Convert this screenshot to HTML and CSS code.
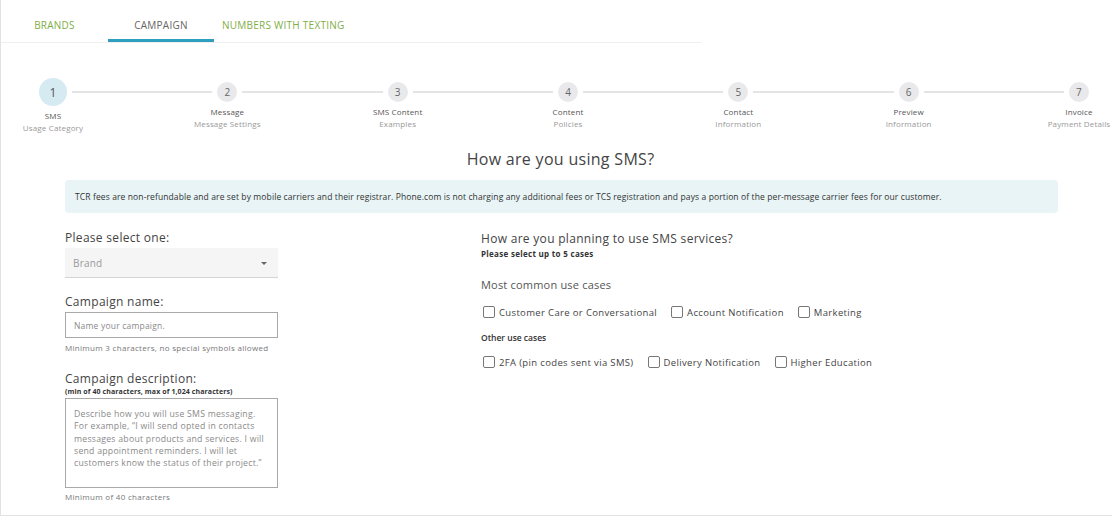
FILE: index.html
```html
<!DOCTYPE html>
<html lang="en">
<head>
  <meta charset="UTF-8">
  <meta name="viewport" content="width=device-width, initial-scale=1.0">
  <title>Campaign - SMS Usage Category</title>
  <link rel="stylesheet" href="styles.css">
</head>
<body>
  <div class="page">
    <nav class="tabs">
      <a class="tab tab-brands">Brands</a>
      <a class="tab tab-campaign active">Campaign</a>
      <a class="tab tab-numbers">Numbers with texting</a>
    </nav>

    <ol class="stepper">
      <li class="step current">
        <span class="step-num">1</span>
        <span class="step-title">SMS</span>
        <span class="step-sub">Usage Category</span>
      </li>
      <li class="step-line"></li>
      <li class="step">
        <span class="step-num">2</span>
        <span class="step-title">Message</span>
        <span class="step-sub">Message Settings</span>
      </li>
      <li class="step-line"></li>
      <li class="step">
        <span class="step-num">3</span>
        <span class="step-title">SMS Content</span>
        <span class="step-sub">Examples</span>
      </li>
      <li class="step-line"></li>
      <li class="step">
        <span class="step-num">4</span>
        <span class="step-title">Content</span>
        <span class="step-sub">Policies</span>
      </li>
      <li class="step-line"></li>
      <li class="step">
        <span class="step-num">5</span>
        <span class="step-title">Contact</span>
        <span class="step-sub">Information</span>
      </li>
      <li class="step-line"></li>
      <li class="step">
        <span class="step-num">6</span>
        <span class="step-title">Preview</span>
        <span class="step-sub">Information</span>
      </li>
      <li class="step-line"></li>
      <li class="step">
        <span class="step-num">7</span>
        <span class="step-title">Invoice</span>
        <span class="step-sub">Payment Details</span>
      </li>
    </ol>

    <h2 class="page-title">How are you using SMS?</h2>

    <div class="notice">
      TCR fees are non-refundable and are set by mobile carriers and their registrar. Phone.com is not charging any additional fees or TCS registration and pays a portion of the per-message carrier fees for our customer.
    </div>

    <div class="form">
      <div class="col-left">
        <label class="field-label" for="usage">Please select one:</label>
        <div class="select-wrap">
          <select id="usage" class="select">
            <option>Brand</option>
          </select>
        </div>

        <label class="field-label label-name" for="campaignName">Campaign name:</label>
        <input type="text" id="campaignName" class="text-input" placeholder="Name your campaign.">
        <p class="hint">Minimum 3 characters, no special symbols allowed</p>

        <label class="field-label label-desc" for="campaignDesc">Campaign description:</label>
        <p class="limits">(min of 40 characters, max of 1,024 characters)</p>
        <textarea id="campaignDesc" class="text-area" placeholder="Describe how you will use SMS messaging.&#10;For example, “I will send opted in contacts&#10;messages about products and services. I will&#10;send appointment reminders. I will let&#10;customers know the status of their project.”"></textarea>
        <p class="hint hint-desc">Minimum of 40 characters</p>
      </div>

      <div class="col-right">
        <h3 class="field-label">How are you planning to use SMS services?</h3>
        <p class="limits limits-cases">Please select up to 5 cases</p>

        <h4 class="group-title">Most common use cases</h4>
        <div class="checks">
          <label class="check"><input type="checkbox"><span>Customer Care or Conversational</span></label>
          <label class="check"><input type="checkbox"><span>Account Notification</span></label>
          <label class="check"><input type="checkbox"><span>Marketing</span></label>
        </div>

        <h4 class="group-sub">Other use cases</h4>
        <div class="checks checks-other">
          <label class="check"><input type="checkbox"><span>2FA (pin codes sent via SMS)</span></label>
          <label class="check"><input type="checkbox"><span>Delivery Notification</span></label>
          <label class="check"><input type="checkbox"><span>Higher Education</span></label>
        </div>
      </div>
    </div>
  </div>
</body>
</html>
```

FILE: styles.css
```css
/* General Reset */
* {
  margin: 0;
  padding: 0;
  box-sizing: border-box;
  font-family: "Open Sans", "Liberation Sans", sans-serif;
}

body {
  background: #ffffff;
  color: #444;
}

.page {
  height: 516px;
  border-left: 1px solid #e2e2e2;
  border-bottom: 1px solid #e2e2e2;
}

/* Tabs */
.tabs {
  display: flex;
  width: 700px;
  height: 43px;
  border-bottom: 1px solid #efefef;
  box-shadow: inset 1px 0 0 -0px #fff;
}

.tab {
  display: flex;
  align-items: center;
  justify-content: center;
  height: 42px;
  padding-top: 8px;
  font-size: 10px;
  letter-spacing: 0.25px;
  text-transform: uppercase;
  color: #7fae45;
  cursor: pointer;
}

.tab-brands {
  width: 107px;
}

.tab-campaign {
  width: 106px;
}

.tab-numbers {
  padding-left: 8px;
  padding-right: 8px;
}

.tab.active {
  color: #666;
  border-bottom: 3px solid #2f9fbf;
  padding-top: 11px;
}

/* Stepper */
.stepper {
  list-style: none;
  display: flex;
  align-items: flex-start;
  margin-top: 35px;
  padding: 0 23px 0 38px;
}

.step {
  display: flex;
  flex-direction: column;
  align-items: center;
  width: 20px;
  white-space: nowrap;
}

.step.current {
  width: 28px;
}

.step-num {
  display: flex;
  align-items: center;
  justify-content: center;
  width: 20px;
  height: 20px;
  margin-top: 4px;
  border-radius: 50%;
  background: #e9e9eb;
  color: #666;
  font-size: 10px;
}

.step.current .step-num {
  width: 28px;
  height: 28px;
  margin-top: 0;
  background: #d6eaf2;
  color: #555;
  font-size: 12px;
}

.step-title {
  margin-top: 4px;
  font-size: 8px;
  line-height: 12px;
  font-weight: 500;
  color: #555;
  letter-spacing: 0.15px;
}

.step-sub {
  font-size: 8px;
  line-height: 12px;
  color: #999;
  letter-spacing: 0.15px;
}

.step-line {
  flex: 1;
  height: 2px;
  margin: 13px 5px 0;
  background: #e4e4e4;
}

/* Heading + notice */
.page-title {
  margin-top: 15px;
  padding-left: 8px;
  text-align: center;
  font-size: 16px;
  line-height: 20px;
  font-weight: 400;
  color: #444;
  letter-spacing: 0.3px;
}

.notice {
  margin: 11px 0 0 64px;
  width: 993px;
  height: 33px;
  padding: 0 10px;
  line-height: 33px;
  border-radius: 4px;
  background: #e8f4f6;
  font-size: 8.5px;
  color: #333;
  letter-spacing: 0.11px;
  white-space: nowrap;
}

/* Form */
.form {
  display: flex;
  margin: 17px 0 0 64px;
}

.col-left {
  width: 213px;
}

.col-right {
  margin-left: 203px;
  padding-top: 1px;
}

.field-label {
  display: block;
  font-size: 12px;
  line-height: 16px;
  font-weight: 400;
  color: #444;
  letter-spacing: 0.3px;
}

.select-wrap {
  position: relative;
  margin-top: 2px;
}

/* dropdown arrow */
.select-wrap::after {
  content: "";
  position: absolute;
  right: 11px;
  top: 14px;
  border-left: 3.5px solid transparent;
  border-right: 3.5px solid transparent;
  border-top: 3.5px solid #666;
}

.select {
  appearance: none;
  width: 100%;
  height: 30px;
  padding: 0 8px;
  border: none;
  border-bottom: 1px solid #d4d4d4;
  background: #f5f5f6;
  font-size: 10px;
  color: #999;
  letter-spacing: 0.2px;
}

.label-name {
  margin-top: 16px;
}

.text-input {
  display: block;
  width: 100%;
  height: 26px;
  margin-top: 2px;
  padding: 0 8px;
  border: 1px solid #a9a9a9;
  font-size: 8.5px;
  letter-spacing: 0.2px;
}

.text-input::placeholder,
.text-area::placeholder {
  color: #8a8a8a;
}

.hint {
  margin-top: 4px;
  font-size: 8px;
  line-height: 12px;
  color: #777;
  letter-spacing: 0.3px;
}

.label-desc {
  margin-top: 17px;
}

.limits {
  font-size: 7px;
  line-height: 10px;
  font-weight: 700;
  color: #333;
  letter-spacing: 0.1px;
}

.text-area {
  display: block;
  width: 100%;
  height: 90px;
  margin-top: 1px;
  padding: 9px 8px 7px;
  border: 1px solid #a9a9a9;
  font-size: 8.7px;
  line-height: 12.3px;
  letter-spacing: 0.25px;
  resize: none;
}

.hint-desc {
  margin-top: 3px;
}

.col-right .limits-cases {
  margin-top: 2px;
  font-size: 8px;
  letter-spacing: 0.3px;
}

.group-title {
  margin-top: 19px;
  font-size: 11px;
  line-height: 14px;
  font-weight: 400;
  color: #555;
  letter-spacing: 0.2px;
}

.checks {
  display: flex;
  gap: 14px;
  margin-top: 13px;
  padding-left: 2px;
}

.checks-other {
  margin-top: 12px;
}

.check {
  display: flex;
  align-items: center;
  gap: 4px;
  height: 14px;
  font-size: 9.5px;
  color: #444;
  letter-spacing: 0.35px;
  cursor: pointer;
}

.check input {
  appearance: none;
  width: 12px;
  height: 12px;
  margin: 0;
  border: 1.5px solid #777;
  border-radius: 2px;
  background: #fff;
}

.group-sub {
  margin-top: 14px;
  font-size: 8.5px;
  line-height: 10px;
  font-weight: 600;
  color: #333;
}
```
